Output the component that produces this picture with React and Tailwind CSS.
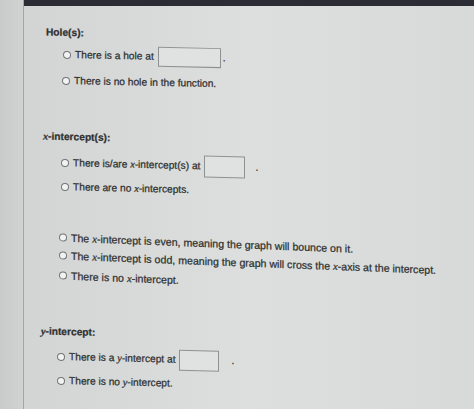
import React from "react";

function X({ v = "x" }) {
  return (
    <span className="italic" style={{ fontFamily: '"Liberation Serif", serif' }}>
      {v}
    </span>
  );
}

function Radio() {
  return (
    <span className="inline-block h-[8px] w-[8px] shrink-0 rounded-full border border-[#727575] bg-[#f1f3f2]" />
  );
}

function Option({ children, className = "" }) {
  return (
    <div className={`flex h-[14px] items-center gap-[4px] ${className}`}>
      <Radio />
      <span className="whitespace-nowrap">{children}</span>
    </div>
  );
}

function Box({ className }) {
  return <span className={`inline-block shrink-0 border border-[#8e9191] bg-[#dfe2e1] ${className}`} />;
}

export default function App() {
  return (
    <div
      className="flex h-[409px] w-[474px] overflow-hidden bg-[#d6d8d7] text-[10.2px] leading-[14px] text-[#2f3131] [-webkit-text-stroke:0.25px_#2f3131]"
      style={{ fontFamily: '"Liberation Sans", Arial, sans-serif' }}
    >
      <div className="w-[24px] shrink-0 border-r border-[#a3a6a6] bg-gradient-to-r from-[#c9cbcb] to-[#d1d3d3]" />
      <div className="flex flex-1 flex-col bg-gradient-to-r from-[#d3d5d4] via-[#dddfde] to-[#d8dad9]">
        <div className="h-[6px] shrink-0 bg-[#2a2e34]" />

        {/* holes */}
        <div className="origin-left skew-y-[1.2deg]">
          <div className="mt-[19px] ml-[22px] h-[14px] font-bold">Hole(s):</div>
          <div className="mt-[4px] ml-[39px] flex h-[22px] items-center gap-[4px]">
            <Radio />
            <span className="whitespace-nowrap">There is a hole at</span>
            <Box className="h-[20px] w-[63px]" />
            <span className="-ml-[2px]">.</span>
          </div>
          <Option className="mt-[8px] ml-[38px]">There is no hole in the function.</Option>
        </div>

        {/* x-intercepts */}
        <div className="origin-left skew-y-[1.4deg]">
          <div className="mt-[42px] ml-[19px] h-[14px] font-bold">
            <X />-intercept(s):
          </div>
          <div className="mt-[8px] ml-[37px] flex h-[22px] items-center gap-[4px]">
            <Radio />
            <span className="whitespace-nowrap">
              There is/are <X />-intercept(s) at
            </span>
            <Box className="h-[22px] w-[41px]" />
            <span className="ml-[6px]">.</span>
          </div>
          <Option className="mt-[6px] ml-[37px]">
            There are no <X />-intercepts.
          </Option>
        </div>

        {/* multiplicity */}
        <div className="origin-left skew-y-[2.2deg] text-[10.6px]">
          <Option className="mt-[36px] ml-[35px]">
            The <X />-intercept is even, meaning the graph will bounce on it.
          </Option>
          <Option className="mt-[4px] ml-[35px]">
            The <X />-intercept is odd, meaning the graph will cross the <X />-axis at the intercept.
          </Option>
          <Option className="mt-[6px] ml-[35px]">
            There is no <X />-intercept.
          </Option>
        </div>

        {/* y-intercept */}
        <div className="origin-left skew-y-[1.4deg]">
          <div className="mt-[43px] ml-[17px] h-[14px] font-bold">
            <X v="y" />-intercept:
          </div>
          <div className="mt-[7px] ml-[33px] flex h-[22px] items-center gap-[4px]">
            <Radio />
            <span className="whitespace-nowrap">
              There is a <X v="y" />-intercept at
            </span>
            <Box className="h-[21px] w-[40px]" />
            <span className="ml-[8px]">.</span>
          </div>
          <Option className="mt-[6px] ml-[33px]">
            There is no <X v="y" />-intercept.
          </Option>
        </div>
      </div>
    </div>
  );
}
